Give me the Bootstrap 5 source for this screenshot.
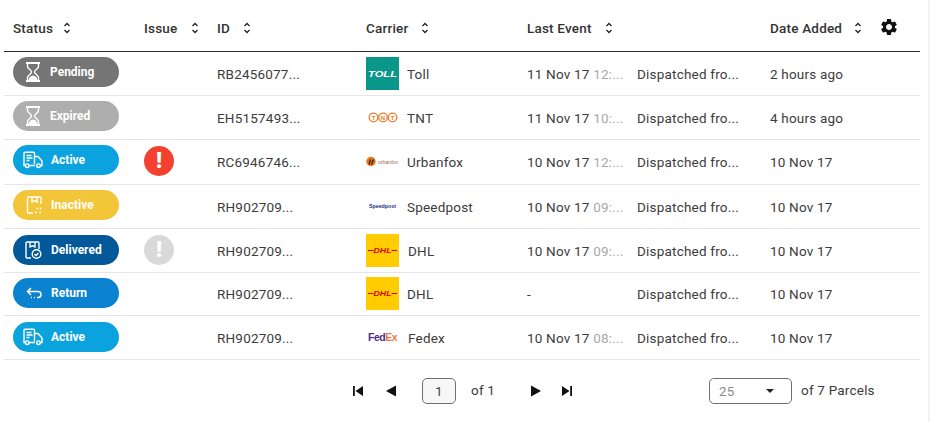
<!DOCTYPE html>
<html lang="en">
<head>
<meta charset="utf-8">
<title>Parcels</title>
<link href="https://cdn.jsdelivr.net/npm/bootstrap@5.3.0/dist/css/bootstrap.min.css" rel="stylesheet">
<style>
html,body{height:100%}
body{background:#fff;font-family:Roboto,"Liberation Sans",sans-serif;font-size:13.5px;color:#3c3c3c;overflow:hidden;letter-spacing:.2px;border-right:2px solid #f3f3f3}
.parcels{table-layout:fixed;width:916px;margin:0 0 0 4px;--bs-table-color:#3c3c3c;--bs-table-bg:transparent}
.parcels th{height:51px;padding:5px 0 0 9px;font-weight:500;color:#333;border-bottom:1px solid #2b2b2b;vertical-align:middle;white-space:nowrap}
.parcels td{padding:2px 0 0 9px;border-bottom:1px solid #e6e6e6;vertical-align:middle;white-space:nowrap;overflow:hidden}
.parcels td.top-cell{padding-top:5px;vertical-align:top}
.parcels td.top-cell.lower{padding-top:6px}
.parcels td.logo-cell{padding-top:0}
.h44{height:44px}.h45{height:45px}.h43{height:43px}
.sorter{width:8px;height:12px;display:inline-block;vertical-align:-1px}
.sort-gap-status{margin-left:10px}.sort-gap-issue{margin-left:14px}.sort-gap-id{margin-left:13px}
.sort-gap-carrier{margin-left:13px}.sort-gap-last{margin-left:13px}.sort-gap-date{margin-left:12px}
.cog{width:20px;height:20px;fill:#111;margin-top:-5px;margin-left:-2px}
.pill{width:106px;height:30px;border-radius:15px;color:#fff;font-size:12px;font-weight:700;letter-spacing:0;display:flex;align-items:center;padding-left:10px;gap:8px}
.pill.tight{gap:7px}
.pill svg{width:20px;height:20px;flex:none;fill:none;stroke:#fff;stroke-width:1.4}
.p-pending{background:#757575}.p-expired{background:#aeaeae}.p-active{background:#0aa3de}.p-inactive{background:#f3c538}.p-delivered{background:#03589a}.p-return{background:#0a82d0}
.alert-dot{width:30px;height:30px;border-radius:50%;display:flex;align-items:center;justify-content:center;color:#fff;font-size:22px;font-weight:900;letter-spacing:0}
.dot-red{background:#f4402f}.dot-grey{background:#d9d9d9}
.clip{overflow:hidden;text-overflow:ellipsis}
.time-part{color:#a8a8a8}
.carrier{display:flex;align-items:center;gap:8px}
.carrier.wider{gap:9px}
.carrier-name{padding-top:2px}
.logo-box{width:33px;height:33px;flex:none;display:block}
.pager{height:62px}
.pg-start{margin-left:352px}
.pg-ico{width:12px;height:12px;fill:#111;flex:none}
.page-box{width:34px;height:26px;border:1px solid #6f6f6f;border-radius:5px;background:#f7f7f7;text-align:center;line-height:24px;margin:0 15px 0 25px;color:#444}
.pg-total{width:43px}
.gap-next{margin-left:16px}.gap-prev{margin-left:21px}.gap-last{margin-left:19px}
.size-pick{width:83px;height:26px;border:1px solid #6f6f6f;border-radius:5px;margin-left:136px;padding:0 9px;color:#8a8a8a;line-height:24px}
.size-caret{width:0;height:0;border-left:4px solid transparent;border-right:4px solid transparent;border-top:4px solid #222}
.of-total{margin-left:9px}
</style>
</head>
<body>
<svg width="0" height="0" class="d-block position-absolute">
<defs>
<symbol id="srt" viewBox="0 0 8 12"><path d="M1.500 4 4 1.500 6.500 4M1.500 8 4 10.500 6.500 8" fill="none" stroke="#222" stroke-width="1.300"/></symbol>
<symbol id="glass" viewBox="0 0 20 20"><path d="M3 1h14M3 19h14" stroke-width="2"/><path d="M4.500 1v3.500c0 2.500 4 3.500 4 5.500s-4 3-4 5.500V19M15.500 1v3.500c0 2.500-4 3.500-4 5.500s4 3 4 5.500V19"/><path d="M5.500 18c.5-3 2.500-4 4.500-4.500 2 .5 4 1.500 4.500 4.500z" fill="#fff" stroke="none"/></symbol>
<symbol id="truck" viewBox="0 0 20 20"><path d="M6 15.500h6M2.300 15.500H1V3.200a1 1 0 0 1 1-1h8.500a1 1 0 0 1 1 1v11M11.500 6.500h3.500l4 4.500v4.500h-1.200M3.500 5.500h5M3.500 8h6M3.500 10.500h3"/><circle cx="4.200" cy="15.700" r="1.800"/><circle cx="15.500" cy="15.700" r="1.800"/></symbol>
<symbol id="box" viewBox="0 0 20 20"><path d="M10 18H5.500a1 1 0 0 1-1-1V3a1 1 0 0 1 1-1h11.500a1 1 0 0 1 1 1v6M9 2v5l2.500-1.200L14 7V2"/><path d="M12 17.500h2M16.500 17.500h1.500M17.500 12.500v2M13.500 13.500h1.500"/></symbol>
<symbol id="boxok" viewBox="0 0 20 20"><path d="M8 18H4a1 1 0 0 1-1-1V3a1 1 0 0 1 1-1h11a1 1 0 0 1 1 1v6M7 2v5l2.500-1.200L12 7V2"/><circle cx="13.500" cy="14" r="4.300"/><path d="m11.500 14 1.500 1.500 2.500-2.500"/></symbol>
<symbol id="back" viewBox="0 0 20 20"><path d="M8 5 4.500 8.500 8 12M4.500 8.500H15a3 3 0 0 1 0 6h-1M8 14.500h1M11 14.500h1" stroke-width="1.500"/></symbol>
<symbol id="dhl" viewBox="0 0 33 33"><rect width="33" height="33" fill="#fc0"/><path d="M2 16h5.500v.9H2zM25.500 16H31v.9h-5.500z" fill="#d40511"/><text x="7.500" y="19" textLength="18" lengthAdjust="spacingAndGlyphs" font-family="Liberation Sans" font-size="6.500" font-weight="700" font-style="italic" fill="#d40511" letter-spacing="0">DHL</text></symbol>
</defs>
</svg>

<table class="table parcels mb-0">
<colgroup><col style="width:131px"><col style="width:73px"><col style="width:149px"><col style="width:161px"><col style="width:110px"><col style="width:133px"><col style="width:111px"><col style="width:48px"></colgroup>
<thead><tr>
<th>Status<svg class="sorter sort-gap-status"><use href="#srt"/></svg></th>
<th>Issue<svg class="sorter sort-gap-issue"><use href="#srt"/></svg></th>
<th>ID<svg class="sorter sort-gap-id"><use href="#srt"/></svg></th>
<th>Carrier<svg class="sorter sort-gap-carrier"><use href="#srt"/></svg></th>
<th colspan="2">Last Event<svg class="sorter sort-gap-last"><use href="#srt"/></svg></th>
<th>Date Added<svg class="sorter sort-gap-date"><use href="#srt"/></svg></th>
<th><svg class="cog" viewBox="0 0 24 24"><path d="M19.140 12.940c.04-.3.06-.61.06-.94 0-.32-.02-.64-.07-.94l2.030-1.580c.18-.14.23-.41.12-.61l-1.920-3.320c-.12-.22-.37-.29-.59-.22l-2.390.96c-.5-.38-1.030-.7-1.620-.94l-.36-2.540c-.04-.24-.24-.41-.48-.41h-3.840c-.24 0-.43.17-.47.41l-.36 2.540c-.59.24-1.130.57-1.620.94l-2.390-.96c-.22-.08-.47 0-.59.22L2.740 8.870c-.12.21-.08.47.12.61l2.030 1.580c-.05.3-.09.63-.09.94s.02.64.07.94l-2.030 1.580c-.18.14-.23.41-.12.61l1.920 3.320c.12.22.37.29.59.22l2.390-.96c.5.38 1.030.7 1.620.94l.36 2.540c.05.24.24.41.48.41h3.840c.24 0 .44-.17.47-.41l.36-2.540c.59-.24 1.130-.56 1.620-.94l2.390.96c.22.08.47 0 .59-.22l1.920-3.320c.12-.22.07-.47-.12-.61l-2.010-1.580zM12 15.600c-1.980 0-3.600-1.620-3.600-3.600s1.620-3.600 3.600-3.600 3.600 1.620 3.600 3.600-1.620 3.600-3.600 3.600z"/></svg></th>
</tr></thead>
<tbody>
<tr class="h44">
<td class="top-cell"><div class="pill tight p-pending"><svg viewBox="0 0 20 20"><use href="#glass"/></svg>Pending</div></td><td></td>
<td><div class="clip">RB2456077...</div></td>
<td class="logo-cell"><div class="carrier"><svg class="logo-box" viewBox="0 0 33 33"><rect width="33" height="33" fill="#0b968a"/><text x="2" y="19.500" textLength="29" lengthAdjust="spacingAndGlyphs" font-family="Liberation Sans" font-size="8.500" font-weight="700" font-style="italic" fill="#fff" letter-spacing="0">TOLL</text></svg><span class="carrier-name">Toll</span></div></td>
<td><div class="clip">11 Nov 17 <span class="time-part">12:...</span></div></td>
<td><div class="clip">Dispatched fro...</div></td><td>2 hours ago</td><td></td>
</tr>
<tr class="h44">
<td class="top-cell"><div class="pill tight p-expired"><svg viewBox="0 0 20 20"><use href="#glass"/></svg>Expired</div></td><td></td>
<td><div class="clip">EH5157493...</div></td>
<td class="logo-cell"><div class="carrier"><svg class="logo-box" viewBox="0 0 33 33"><g fill="none" stroke="#ef7d28" stroke-width="1.300"><circle cx="7.500" cy="16.500" r="4.300"/><circle cx="17" cy="16.500" r="4.300"/><circle cx="26.500" cy="16.500" r="4.300"/></g><g font-family="Liberation Sans" font-size="6" font-weight="700" fill="#ef7d28" text-anchor="middle" letter-spacing="0"><text x="7.500" y="18.700">T</text><text x="17" y="18.700">N</text><text x="26.500" y="18.700">T</text></g></svg><span class="carrier-name">TNT</span></div></td>
<td><div class="clip">11 Nov 17 <span class="time-part">10:...</span></div></td>
<td><div class="clip">Dispatched fro...</div></td><td>4 hours ago</td><td></td>
</tr>
<tr class="h45">
<td class="top-cell"><div class="pill p-active"><svg viewBox="0 0 20 20"><use href="#truck"/></svg>Active</div></td>
<td class="top-cell lower"><div class="alert-dot dot-red">!</div></td>
<td><div class="clip">RC6946746...</div></td>
<td class="logo-cell"><div class="carrier"><svg class="logo-box" viewBox="0 0 33 33"><circle cx="5" cy="16.500" r="4.700" fill="#e8771e"/><path d="M3 19.500l1.500-5M5.500 19.500l2-5" stroke="#321" stroke-width="1.300"/><text x="12" y="18.500" textLength="20" lengthAdjust="spacingAndGlyphs" font-family="Liberation Sans" font-size="5.500" fill="#a56b4a" letter-spacing="0">urbanfox</text></svg><span class="carrier-name">Urbanfox</span></div></td>
<td><div class="clip">10 Nov 17 <span class="time-part">12:...</span></div></td>
<td><div class="clip">Dispatched fro...</div></td><td>10 Nov 17</td><td></td>
</tr>
<tr class="h44">
<td class="top-cell"><div class="pill p-inactive"><svg viewBox="0 0 20 20"><use href="#box"/></svg>Inactive</div></td><td></td>
<td><div class="clip">RH902709...</div></td>
<td class="logo-cell"><div class="carrier"><svg class="logo-box" viewBox="0 0 33 33"><text x="3" y="18" textLength="27" lengthAdjust="spacingAndGlyphs" font-family="Liberation Sans" font-size="4.800" font-weight="700" fill="#23308c" letter-spacing="0">Speedpost</text></svg><span class="carrier-name">Speedpost</span></div></td>
<td><div class="clip">10 Nov 17 <span class="time-part">09:...</span></div></td>
<td><div class="clip">Dispatched fro...</div></td><td>10 Nov 17</td><td></td>
</tr>
<tr class="h44">
<td class="top-cell lower"><div class="pill p-delivered"><svg viewBox="0 0 20 20"><use href="#boxok"/></svg>Delivered</div></td>
<td class="top-cell lower"><div class="alert-dot dot-grey">!</div></td>
<td><div class="clip">RH902709...</div></td>
<td class="logo-cell"><div class="carrier wider"><svg class="logo-box"><use href="#dhl"/></svg><span class="carrier-name">DHL</span></div></td>
<td><div class="clip">10 Nov 17 <span class="time-part">09:...</span></div></td>
<td><div class="clip">Dispatched fro...</div></td><td>10 Nov 17</td><td></td>
</tr>
<tr class="h43">
<td class="top-cell"><div class="pill p-return"><svg viewBox="0 0 20 20"><use href="#back"/></svg>Return</div></td><td></td>
<td><div class="clip">RH902709...</div></td>
<td class="logo-cell"><div class="carrier"><svg class="logo-box"><use href="#dhl"/></svg><span class="carrier-name">DHL</span></div></td>
<td>-</td>
<td><div class="clip">Dispatched fro...</div></td><td>10 Nov 17</td><td></td>
</tr>
<tr class="h44">
<td class="top-cell lower"><div class="pill p-active"><svg viewBox="0 0 20 20"><use href="#truck"/></svg>Active</div></td><td></td>
<td><div class="clip">RH902709...</div></td>
<td class="logo-cell"><div class="carrier wider"><svg class="logo-box" viewBox="0 0 33 33"><text x="2" y="20" font-family="Liberation Sans" font-size="10.500" font-weight="700" letter-spacing="-.5" fill="#4d2c8f">Fed<tspan fill="#ee7a45">Ex</tspan></text></svg><span class="carrier-name">Fedex</span></div></td>
<td><div class="clip">10 Nov 17 <span class="time-part">08:...</span></div></td>
<td><div class="clip">Dispatched fro...</div></td><td>10 Nov 17</td><td></td>
</tr>
</tbody>
</table>

<div class="pager d-flex align-items-center">
<svg class="pg-ico pg-start" viewBox="0 0 12 12"><path d="M1 1h1.800v10H1zM11 1v10L3.500 6z"/></svg>
<svg class="pg-ico gap-prev" viewBox="0 0 12 12"><path d="M11 .5v11L1 6z"/></svg>
<div class="page-box">1</div><span class="pg-total">of 1</span>
<svg class="pg-ico gap-next" viewBox="0 0 12 12"><path d="M1 .5v11L11 6z"/></svg>
<svg class="pg-ico gap-last" viewBox="0 0 12 12"><path d="M11 1H9.200v10H11zM1 1v10L8.500 6z"/></svg>
<div class="size-pick d-flex justify-content-between align-items-center"><span>25</span><span class="size-caret me-2"></span></div>
<span class="of-total">of 7 Parcels</span>
</div>
</body>
</html>
